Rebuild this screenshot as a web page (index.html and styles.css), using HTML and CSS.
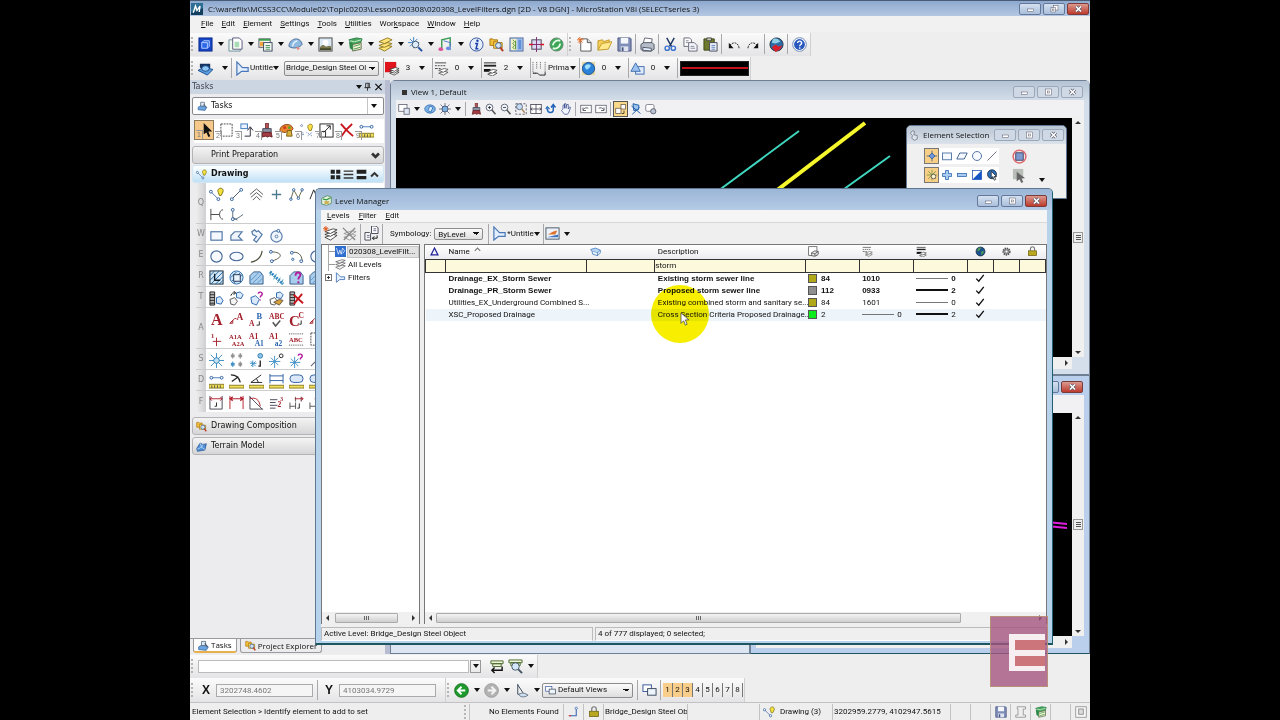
FILE: index.html
```html
<!DOCTYPE html>
<html lang="en">
<head>
  <meta charset="UTF-8">
  <title>MicroStation V8i - Level Manager</title>
  <link rel="stylesheet" href="styles.css">
</head>
<body>

<!-- icon library -->
<svg class="sprite" aria-hidden="true">
  <symbol id="logo" viewBox="0 0 16 16"><rect width="16" height="16" fill="#123d5c"/><path d="M0 0h16v7L0 13z" fill="#2d6f94"/><path d="M3 13l3-9 2 6 4-6-1 8" fill="none" stroke="#fff" stroke-width="1.8"/></symbol>
  <symbol id="cube" viewBox="0 0 16 16"><rect x="1" y="1" width="14" height="14" fill="#1746c8" stroke="#0a2a8c"/><path d="M4 6h6v6H4zM4 6l2-2h6v6l-2 2" fill="#2d68e8" stroke="#b9d2ff"/></symbol>
  <symbol id="page" viewBox="0 0 16 16"><path d="M1 3h9l3 3v9H1z" fill="#eef6ee" stroke="#6d8f9f"/><path d="M5 1h7l3 3v9H5z" fill="#fff" stroke="#557"/><path d="M7 5h5v6H7z" fill="#a9dcb4"/></symbol>
  <symbol id="dialog" viewBox="0 0 16 16"><rect x="1" y="2" width="12" height="9" fill="#fff" stroke="#556"/><path d="M1 2h12v2H1z" fill="#39a04c"/><path d="M2 5h4v5H2z" fill="#f2a640"/><rect x="6" y="6" width="9" height="9" fill="#fff" stroke="#345"/><path d="M8 9h5M8 11h5M8 13h5" stroke="#3a8a4a"/></symbol>
  <symbol id="disc" viewBox="0 0 16 16"><path d="M1 10c0-5 4-8 8-8s6 4 6 6c-3 4-10 5-14 2z" fill="#8db8e0" stroke="#4a6b94"/><path d="M5 10c0-3 2-5 5-6" fill="none" stroke="#e4f1ff" stroke-width="1.5"/><path d="M9 10l4 2-3 2z" fill="#e8877a"/></symbol>
  <symbol id="image" viewBox="0 0 16 16"><rect x="1" y="1" width="14" height="14" fill="#dbe9f3" stroke="#444"/><circle cx="8" cy="6" r="3" fill="#fff"/><path d="M2 11c3-4 5-2 6-1s4-2 6 0v4H2z" fill="#7c7a4e"/><path d="M2 13h12" stroke="#454a2c" stroke-width="2"/></symbol>
  <symbol id="sheets" viewBox="0 0 16 16"><path d="M1 3l8-2 6 1-2 5-8 2z" fill="#45a85c" stroke="#2b7a45"/><path d="M2 4l5 1 7-2" fill="none" stroke="#c7efd0"/><path d="M5 8l9-2v7l-9 2z" fill="#f6f3d2" stroke="#5c6b48"/><path d="M6 10l7-2M6 13l7-2" stroke="#3f9a55"/><path d="M1 5l4 2v7l-3-2z" fill="#2f8a48"/></symbol>
  <symbol id="layers" viewBox="0 0 16 16"><g fill="#ffe47a" stroke="#8f7a1c"><path d="M1 12l9-3 5 1-8 5z"/><path d="M1 9l9-3 5 1-8 4z"/><path d="M1 5l9-4 5 2-8 4z"/></g></symbol>
  <symbol id="glayers" viewBox="0 0 16 16"><g fill="#f4f4f4" stroke="#555"><path d="M1 12l9-3 5 1-8 5z"/><path d="M1 8l9-3 5 1-8 4z"/><path d="M1 4l9-3 5 1-8 4z"/></g></symbol>
  <symbol id="starmag" viewBox="0 0 16 16"><path d="M6 0v12M0 6h12M2 2l8 8M10 2l-8 8" stroke="#3d7fc4"/><circle cx="8" cy="8" r="3.5" fill="#dcedff" stroke="#456"/><path d="M11 11l4 4" stroke="#1d4f9e" stroke-width="2"/></symbol>
  <symbol id="music" viewBox="0 0 16 16"><path d="M4 12V3l9-2v9" fill="none" stroke="#3d9a52" stroke-width="1.5"/><path d="M6 4l7 2v8" fill="none" stroke="#4d74cf"/><ellipse cx="3" cy="13" rx="2.5" ry="2" fill="#d9549a"/><ellipse cx="11" cy="12" rx="2.5" ry="2" fill="#6b8ee0"/></symbol>
  <symbol id="info" viewBox="0 0 16 16"><circle cx="8" cy="8" r="7" fill="#e6eefc" stroke="#34549c"/><circle cx="9" cy="4" r="1.3" fill="#1c40a8"/><path d="M6.500 7H9l-1.500 5.500H10" fill="none" stroke="#1c40a8" stroke-width="1.6"/></symbol>
  <symbol id="folders" viewBox="0 0 16 16"><path d="M1 2h3l1 1h4v6H1z" fill="#f6c13a" stroke="#a87814"/><path d="M5 5h3l1 1h5v6H5z" fill="#ffd960" stroke="#a87814"/><circle cx="10" cy="9" r="3" fill="#cfe4fa" stroke="#3b5c8d"/><path d="M12 11l3 4" stroke="#b33a22" stroke-width="2"/></symbol>
  <symbol id="options" viewBox="0 0 16 16"><rect x="1" y="1" width="14" height="14" fill="#9fc0ec" stroke="#5670a0"/><path d="M2 2h6v12H2z" fill="#f3f0c8"/><path d="M4 3l2 2-2 2 2 2-2 2 2 2M7 4v9" stroke="#4c8f2e" fill="none"/><path d="M10 3h3v10h-3z" fill="#5f8fd8"/></symbol>
  <symbol id="cross" viewBox="0 0 16 16"><rect x="3" y="3" width="10" height="10" fill="#dcd7f2" stroke="#445"/><path d="M8 0v16M0 8h16" stroke="#7d2b6b"/><path d="M0 8h4M12 8h4" stroke="#d12" stroke-width="1.5"/></symbol>
  <symbol id="refresh" viewBox="0 0 16 16"><circle cx="8" cy="8" r="7" fill="#3da659" stroke="#6d8a74"/><path d="M4 9c1-5 5-6 8-5M12 7c-1 5-5 6-8 5" fill="none" stroke="#e6ffe9" stroke-width="2"/></symbol>
  <symbol id="new" viewBox="0 0 16 16"><path d="M4 2h7l4 4v9H4z" fill="#fff" stroke="#555"/><path d="M11 2v4h4" fill="#ddd" stroke="#555"/><path d="M3 0v7M0 3h7M1 1l5 5M6 1L1 6" stroke="#e8702a"/></symbol>
  <symbol id="open" viewBox="0 0 16 16"><path d="M1 14V4l5-1 1 2 6-2v3" fill="#f5cf5a" stroke="#c39a28"/><path d="M1 14L5 7l11-2-4 8z" fill="#ffe98c" stroke="#c39a28"/></symbol>
  <symbol id="save" viewBox="0 0 16 16"><path d="M1 1h13l1 1v13H1z" fill="#7f8fb8" stroke="#4a5680"/><path d="M4 1h8v6H4z" fill="#f5f7fc"/><path d="M4 10h8v5H4z" fill="#dfe4f0"/><path d="M5 11h2v4H5z" fill="#4a5680"/></symbol>
  <symbol id="print" viewBox="0 0 16 16"><path d="M5 1l8 1-1 6H3z" fill="#fff" stroke="#667"/><path d="M1 8l3-2h9l2 2v5l-3 2H3l-2-2z" fill="#b6bcc8" stroke="#4d5564"/><path d="M3 11l9 1v3l-9-1z" fill="#e9f0ff" stroke="#4d5564"/></symbol>
  <symbol id="cut" viewBox="0 0 16 16"><path d="M4 1l5 9M12 1L7 10" stroke="#223a66" stroke-width="1.6"/><circle cx="4.500" cy="12" r="2.300" fill="none" stroke="#3a73cf" stroke-width="1.500"/><circle cx="11" cy="12" r="2.300" fill="none" stroke="#3a73cf" stroke-width="1.500"/></symbol>
  <symbol id="copy" viewBox="0 0 16 16"><path d="M1 1h6l2 2v7H1z" fill="#fff" stroke="#667"/><path d="M6 6h6l3 3v6H6z" fill="#f4f6fb" stroke="#667"/><path d="M3 4h3M3 6h3M8 10h4M8 12h5" stroke="#889"/></symbol>
  <symbol id="paste" viewBox="0 0 16 16"><path d="M1 2h11v12H1z" fill="#6d7a2c" stroke="#3e4716"/><path d="M4 1h5v3H4z" fill="#c9c9b0" stroke="#444"/><path d="M7 6h8v9H7z" fill="#eef3fb" stroke="#445"/><path d="M9 9h4M9 11h4M9 13h4" stroke="#5c7fb8"/></symbol>
  <symbol id="undo" viewBox="0 0 16 16"><path d="M4 9c3-4 9-4 10 3" fill="none" stroke="#222" stroke-dasharray="2 1"/><path d="M3 6v6h5z" fill="#111"/></symbol>
  <symbol id="redo" viewBox="0 0 16 16"><path d="M12 9C9 5 3 5 2 12" fill="none" stroke="#222" stroke-dasharray="2 1"/><path d="M13 6v6H8z" fill="#111"/></symbol>
  <symbol id="webhome" viewBox="0 0 16 16"><circle cx="8" cy="8" r="7" fill="#2c6da8" stroke="#234"/><path d="M4 2c4-1 6 0 8 3l-5 2-4-1z" fill="#8fd0e6"/><path d="M3 11l4-3 3 2 4-1-2 4-5 3z" fill="#d8202c"/></symbol>
  <symbol id="help" viewBox="0 0 16 16"><circle cx="8" cy="8" r="7.300" fill="#fff" stroke="#6f86b4"/><circle cx="8" cy="8" r="5.800" fill="#2858be"/><path d="M6 6.500c0-3 4.500-2.600 4.300 0C10.200 8 8.300 8 8.200 9.800" fill="none" stroke="#fff" stroke-width="1.500"/><circle cx="8.200" cy="11.700" r=".9" fill="#fff"/></symbol>
  <symbol id="model" viewBox="0 0 16 16"><path d="M0 10l6-3 10 2-6 6z" fill="#5aa0e0" stroke="#1c4c8c"/><path d="M2 3h11v5l-5 3-6-4z" fill="#14325c"/><ellipse cx="8" cy="8" rx="4" ry="3" fill="#8cc6f2" stroke="#1c4c8c"/></symbol>
  <symbol id="funnel" viewBox="0 0 16 16"><path d="M2 1v14l5-4h7V7H8z" fill="#e3efff" stroke="#4a78b8" stroke-width="1.300"/></symbol>
  <symbol id="color" viewBox="0 0 16 16"><path d="M0 1h12v11H0z" fill="#e0141c"/><g fill="#fff" stroke="#333" stroke-width=".8"><path d="M5 13l6-2 4 1-5 3z"/><path d="M5 11l6-2 4 1-5 3z"/><path d="M5 9l6-2 4 1-5 3z"/></g></symbol>
  <symbol id="lstyle" viewBox="0 0 16 16"><path d="M1 2h12" stroke="#444"/><path d="M1 5h12" stroke="#444" stroke-dasharray="2 1"/><path d="M1 8h6" stroke="#444" stroke-dasharray="3 1"/><g fill="#fff" stroke="#444" stroke-width=".8"><path d="M5 13l6-2 4 1-5 3z"/><path d="M5 10l6-2 4 1-5 3z"/></g></symbol>
  <symbol id="lweight" viewBox="0 0 16 16"><path d="M1 2h13" stroke="#222"/><path d="M1 5h13" stroke="#222" stroke-width="2"/><path d="M1 10h7" stroke="#111" stroke-width="3"/><g fill="#fff" stroke="#333" stroke-width=".8"><path d="M5 14l6-2 4 1-5 3z"/><path d="M5 11l6-2 4 1-5 3z"/></g></symbol>
  <symbol id="eclass" viewBox="0 0 16 16"><path d="M1 1v12h4M5 1v8M9 1v8M14 1v12" fill="none" stroke="#555" stroke-dasharray="1 1"/><path d="M1 13h5l2 2h6v-3" fill="none" stroke="#222"/></symbol>
  <symbol id="sphere" viewBox="0 0 16 16"><path d="M1 1h14v14H1z" fill="#e6d9a2"/><circle cx="8" cy="8" r="6.500" fill="#2c82d8" stroke="#1a4f94"/><path d="M4 6c1-3 4-3 6-2 1 2-1 3-2 4-1 2-3 1-4-2z" fill="#9fe0ff"/></symbol>
  <symbol id="prio" viewBox="0 0 16 16"><rect x="6" y="6" width="9" height="8" fill="#dceafb" stroke="#3f6cae"/><path d="M1 11l5-9 5 9z" fill="#9cc3f0" stroke="#3f6cae"/></symbol>
  <symbol id="tasks" viewBox="0 0 16 16"><path d="M1 10l5-3 9 3-3 5-11-1z" fill="#6ba4de" stroke="#2b5c9c"/><path d="M5 2h6v6H5z" fill="#dbe9f8" stroke="#456"/><path d="M10 5l4 5" stroke="#456" stroke-width="1.500"/></symbol>
  <symbol id="terrain" viewBox="0 0 16 16"><path d="M1 11l5-8 4 2 5-1-2 9-5 1-6 1z" fill="#4f8fd6" stroke="#244f8c"/><path d="M6 3l2 6-6 3M8 9l5 3M10 5L8 9" fill="none" stroke="#d2e6fb"/></symbol>
  <symbol id="pin" viewBox="0 0 16 16"><path d="M5 2h6v7H5zM3 9h10M8 9v5M9 2v7" fill="none" stroke="#333" stroke-width="1.500"/></symbol>
  <symbol id="x" viewBox="0 0 16 16"><path d="M3 3l10 10M13 3L3 13" stroke="currentColor" stroke-width="2"/></symbol>
  <symbol id="wmin" viewBox="0 0 16 16"><rect x="2" y="8" width="12" height="5" fill="#fff" stroke="#556"/></symbol>
  <symbol id="wmax" viewBox="0 0 16 16"><rect x="2" y="2" width="12" height="12" fill="#fff" stroke="#556"/><rect x="6" y="6" width="4" height="4" fill="#fff" stroke="#556"/></symbol>
  <symbol id="wres" viewBox="0 0 16 16"><rect x="6" y="1" width="9" height="9" fill="#fff" stroke="#556"/><rect x="1" y="5" width="9" height="9" fill="#fff" stroke="#556"/><rect x="4" y="8" width="3" height="3" fill="#fff" stroke="#556"/></symbol>
  <symbol id="wx" viewBox="0 0 16 16"><path d="M3 3l10 10M13 3L3 13" stroke="#556" stroke-width="6"/><path d="M3 3l10 10M13 3L3 13" stroke="#fff" stroke-width="3.500"/></symbol>
  <!-- task tools -->
  <symbol id="arrow" viewBox="0 0 16 16"><path d="M5 0v12l3-2 2 5 2-1-2-5h4z" fill="#111"/></symbol>
  <symbol id="fence" viewBox="0 0 16 16"><rect x="2" y="1" width="12" height="13" fill="none" stroke="#444" stroke-dasharray="2 1"/></symbol>
  <symbol id="manip" viewBox="0 0 16 16"><rect x="2" y="1" width="7" height="5" fill="#eaf3ff" stroke="#3b77b8"/><path d="M12 5v9M9 8l3-4 3 4M6 14h6" fill="none" stroke="#223"/></symbol>
  <symbol id="brush" viewBox="0 0 16 16"><path d="M7 0h3v6H7z" fill="#b5555a" stroke="#733"/><path d="M4 6h9v4H4z" fill="#8c93a4" stroke="#445"/><path d="M4 10h9l1 5-3-1-2 1-2-1-4 1z" fill="#a33b45" stroke="#622"/></symbol>
  <symbol id="mush" viewBox="0 0 16 16"><path d="M1 7c1-6 12-8 14-1-2 4-4 2-5 2s-2 3-5 2-4-1-4-3z" fill="#e8862b" stroke="#8e4412"/><path d="M9 8h4l1 6H8z" fill="#d9b13c" stroke="#7a5c12"/><circle cx="6" cy="5" r="1.500" fill="#c32"/><circle cx="11" cy="5" r="1.500" fill="#5a2"/></symbol>
  <symbol id="bulb" viewBox="0 0 16 16"><path d="M10 6c-3-5 6-7 4-1l-1 3h-2z" fill="#ffe34d" stroke="#8f7b14"/><path d="M3 1v4M1 3h4M4 10v4M2 12h4M8 10l6 4M14 10l-5 4" stroke="#5674a8" stroke-dasharray="1 1"/></symbol>
  <symbol id="scale" viewBox="0 0 16 16"><rect x="1" y="1" width="14" height="14" fill="none" stroke="#222"/><path d="M5 10l7-7M8 3h4v4M1 9h6v6" fill="none" stroke="#222"/></symbol>
  <symbol id="del" viewBox="0 0 16 16"><path d="M2 1c4 5 8 9 13 13M14 1C9 5 5 10 2 15" fill="none" stroke="#c8141c" stroke-width="2"/></symbol>
  <symbol id="measure" viewBox="0 0 16 16"><path d="M3 4h10" stroke="#4a7cc0"/><circle cx="2.500" cy="4" r="1.500" fill="#fff" stroke="#2d5f9f"/><circle cx="13.500" cy="4" r="1.500" fill="#fff" stroke="#2d5f9f"/><path d="M0 11h16v4H0z" fill="#f1e05c" stroke="#8a7b20"/><path d="M3 12v3M6 12v3M9 12v3M12 12v3" stroke="#554"/></symbol>
  <symbol id="smart" viewBox="0 0 16 16"><path d="M2 5l8 8" stroke="#4c6fa8"/><circle cx="2" cy="5" r="1.500" fill="#fff" stroke="#2d5f9f"/><circle cx="10" cy="13" r="1.500" fill="#fff" stroke="#2d5f9f"/><path d="M10 6c-3-5 6-7 5-1l-2 4h-2z" fill="#f4e23c" stroke="#7d7318"/></symbol>
  <symbol id="line" viewBox="0 0 16 16"><path d="M3 13L13 3" stroke="#456"/><circle cx="3" cy="13" r="1.500" fill="#fff" stroke="#2d5f9f"/><circle cx="13" cy="3" r="1.500" fill="#fff" stroke="#2d5f9f"/></symbol>
  <symbol id="multi" viewBox="0 0 16 16"><path d="M1 8l7-6 7 6M2 11l6-5 6 5M4 14l4-4 4 4" fill="none" stroke="#555"/></symbol>
  <symbol id="plus" viewBox="0 0 16 16"><path d="M8 3v10M3 8h10" stroke="#4a7a8c" stroke-width="1.400"/></symbol>
  <symbol id="curve" viewBox="0 0 16 16"><path d="M2 13L5 3l5 9 4-9" fill="none" stroke="#664"/><g fill="#fff" stroke="#2d5f9f"><circle cx="2" cy="13" r="1.300"/><circle cx="5" cy="3" r="1.300"/><circle cx="10" cy="12" r="1.300"/><circle cx="14" cy="3" r="1.300"/></g></symbol>
  <symbol id="zig" viewBox="0 0 16 16"><path d="M1 13L5 3l4 9 5-9" fill="none" stroke="#222"/></symbol>
  <symbol id="cons" viewBox="0 0 16 16"><path d="M2 2v12M2 8h9M15 3c-5 0-5 10 0 10" fill="none" stroke="#444"/></symbol>
  <symbol id="perp" viewBox="0 0 16 16"><path d="M4 3v11c4-1 7-3 11-6M4 11l5 3" fill="none" stroke="#567"/><circle cx="4" cy="3" r="1.500" fill="#fff" stroke="#2d5f9f"/><circle cx="4" cy="13" r="1.500" fill="#fff" stroke="#2d5f9f"/></symbol>
  <symbol id="rect" viewBox="0 0 16 16"><rect x="2" y="4" width="12" height="9" fill="#f5f9ff" stroke="#567ba8" stroke-width="1.300"/></symbol>
  <symbol id="shape" viewBox="0 0 16 16"><path d="M2 13V8l4-4h8l-4 5 4 4z" fill="#f0f5fc" stroke="#567ba8" stroke-width="1.300"/></symbol>
  <symbol id="ortho" viewBox="0 0 16 16"><path d="M3 4l3-2 2 2 2-1 4 4-6 8-3-2 3-4-4-2z" fill="#f0f5fc" stroke="#567ba8" stroke-width="1.300"/></symbol>
  <symbol id="poly" viewBox="0 0 16 16"><circle cx="8" cy="9" r="6" fill="#f0f5fc" stroke="#567ba8" stroke-width="1.200"/><circle cx="8" cy="9" r="1.500" fill="none" stroke="#567ba8"/><circle cx="10" cy="3" r="1.500" fill="#fff" stroke="#2d5f9f"/></symbol>
  <symbol id="circle" viewBox="0 0 16 16"><circle cx="8" cy="8" r="6" fill="#f6faff" stroke="#48699a" stroke-width="1.200"/></symbol>
  <symbol id="ellipse" viewBox="0 0 16 16"><ellipse cx="8" cy="8" rx="7" ry="4.500" fill="#f6faff" stroke="#48699a" stroke-width="1.200"/></symbol>
  <symbol id="arc" viewBox="0 0 16 16"><path d="M2 14C8 13 13 9 14 2" fill="none" stroke="#554" stroke-width="1.300"/></symbol>
  <symbol id="arc2" viewBox="0 0 16 16"><path d="M2 3c10 0 16 5 1 10" fill="none" stroke="#554"/><circle cx="2" cy="3" r="1.500" fill="#fff" stroke="#2d5f9f"/><circle cx="3" cy="13" r="1.500" fill="#fff" stroke="#2d5f9f"/></symbol>
  <symbol id="arc3" viewBox="0 0 16 16"><path d="M3 4c6-2 11 2 11 9" fill="none" stroke="#554"/><circle cx="3" cy="4" r="1.500" fill="#fff" stroke="#2d5f9f"/><circle cx="13" cy="13" r="1.500" fill="#fff" stroke="#2d5f9f"/><circle cx="4" cy="11" r="1.200" fill="#fff" stroke="#2d5f9f"/></symbol>
  <symbol id="hatch" viewBox="0 0 16 16"><rect x="1" y="1" width="14" height="14" fill="#d4e9f8" stroke="#123"/><path d="M1 6l5-5M1 11L11 1M2 15L15 2M7 15l8-8M11 15l4-4" stroke="#1d5f9c"/><path d="M6 4v7h6" fill="none" stroke="#123" stroke-width="1.500"/></symbol>
  <symbol id="hatch2" viewBox="0 0 16 16"><circle cx="8" cy="8" r="7" fill="#cde5f8" stroke="#2c6ba8"/><path d="M3 12L12 3M5 14l9-9M2 8l6-6M4 4l9 9" stroke="#2c6ba8"/><rect x="5" y="5" width="7" height="7" fill="#e8f3fc" stroke="#235"/></symbol>
  <symbol id="pattern" viewBox="0 0 16 16"><path d="M1 15V6l4-4h7l3 4v9z" fill="#a9cdec" stroke="#345c88"/><path d="M2 11l8-8M4 14L14 4M9 14l5-5" stroke="#5f95c8"/></symbol>
  <symbol id="lpat" viewBox="0 0 16 16"><path d="M1 2l14 13" stroke="#2c82c8" stroke-width="3" stroke-dasharray="2 1"/><path d="M3 1l-2 5M8 4l-3 6M12 8l-3 6M15 10l-2 5" stroke="#49a"/></symbol>
  <symbol id="patq" viewBox="0 0 16 16"><path d="M1 15V6l4-4h7l3 4v9z" fill="#a9cdec" stroke="#345c88"/><path d="M7 6c0-5 6-4 5 0-1 2-2 2-2 4M10 12v2" fill="none" stroke="#b31a9c" stroke-width="2"/></symbol>
  <symbol id="tag" viewBox="0 0 16 16"><path d="M1 1h5v14H1z" fill="#bbb" stroke="#222"/><path d="M1 4h5M1 7h5M1 10h5M1 13h5" stroke="#222"/><path d="M8 7l4-1 3 4-2 4-5-1z" fill="#dbeafb" stroke="#2b66b0"/></symbol>
  <symbol id="tag2" viewBox="0 0 16 16"><path d="M8 2l4-1 3 3-2 4-5-1z" fill="#dbeafb" stroke="#2b66b0"/><path d="M1 9l5-2 3 4-3 4-4-1z" fill="#f4f4f4" stroke="#555"/><path d="M2 5c1-3 2-3 5-3M5 0l2 2-2 2" fill="none" stroke="#111"/></symbol>
  <symbol id="tagq" viewBox="0 0 16 16"><path d="M2 7l5-2 4 4-3 6-5-2z" fill="#dbeafb" stroke="#2b66b0"/><path d="M10 3c0-3 5-2 4 1-1 1-2 1-2 3M12 9v1" fill="none" stroke="#b31a9c" stroke-width="1.500"/></symbol>
  <symbol id="tag4" viewBox="0 0 16 16"><path d="M8 2l4-1 3 3-2 4-5-1z" fill="#dbeafb" stroke="#2b66b0"/><path d="M1 9l5-2 3 4-3 4-4-1z" fill="#fff" stroke="#555"/><path d="M5 12l6-3 4 1-4 5z" fill="#d4a13a" stroke="#654"/></symbol>
  <symbol id="tagx" viewBox="0 0 16 16"><path d="M1 1h5v14H1z" fill="#bbb" stroke="#222"/><path d="M1 4h5M1 7h5M1 10h5M1 13h5" stroke="#222"/><path d="M5 4l10 9M14 3L5 14" stroke="#c8141c" stroke-width="2"/></symbol>
  <symbol id="t-a" viewBox="0 0 16 16"><text class="ser red" x="2" y="14" font-size="17">A</text></symbol>
  <symbol id="t-note" viewBox="0 0 16 16"><text class="ser red" x="8" y="9" font-size="10">A</text><path d="M1 12l3-3v3h-3l5-5h2" fill="none" stroke="#a3202c"/></symbol>
  <symbol id="t-edit" viewBox="0 0 16 16"><text class="ser blue" x="8" y="7" font-size="9">B</text><text class="ser red" x="0" y="15" font-size="8">A</text><path d="M8 14h3v-4" fill="none" stroke="#222"/></symbol>
  <symbol id="t-spell" viewBox="0 0 16 16"><text class="ser red" x="0" y="7" font-size="8">ABC</text><path d="M4 11l3 4 5-6" fill="none" stroke="#555" stroke-width="1.600"/></symbol>
  <symbol id="t-c" viewBox="0 0 16 16"><text class="ser red" x="0" y="15" font-size="16">C</text><text class="ser red" x="10" y="6" font-size="8">C</text><path d="M11 13h2V9" fill="none" stroke="#222"/></symbol>
  <symbol id="t-attr" viewBox="0 0 16 16"><text class="ser red" x="2" y="6" font-size="7">1</text><path d="M8 6v9M4 10h9" stroke="#a3202c"/></symbol>
  <symbol id="t-copy" viewBox="0 0 16 16"><text class="ser red" x="0" y="7" font-size="7">A1A</text><text class="ser red" x="3" y="15" font-size="7">A2A</text></symbol>
  <symbol id="t-inc" viewBox="0 0 16 16"><text class="ser red" x="0" y="7" font-size="8">A1</text><text class="ser blue" x="6" y="15" font-size="8">A1</text></symbol>
  <symbol id="t-inc2" viewBox="0 0 16 16"><text class="ser red" x="0" y="7" font-size="8">A1</text><text class="ser blue" x="6" y="15" font-size="8">a2</text></symbol>
  <symbol id="t-field" viewBox="0 0 16 16"><path d="M0 2h16M0 14h16" stroke="#444" stroke-dasharray="1 1"/><text class="ser red" x="0" y="11" font-size="7">ABC</text></symbol>
  <symbol id="cell" viewBox="0 0 16 16"><path d="M8 0v16M0 8h16M2 2l12 12M14 2L2 14" stroke="#3f8fc4"/><circle cx="8" cy="8" r="3" fill="#bfe2f6" stroke="#2f7cb0"/></symbol>
  <symbol id="cells" viewBox="0 0 16 16"><g stroke-width="3"><path d="M2 3h4M10 3h4M10 12h4" stroke="#9a9a9a"/><path d="M2 12h4" stroke="#3f8fc4"/></g><path d="M4 0v6M12 0v6M12 9v6" stroke="#888"/><path d="M4 9v6" stroke="#3f8fc4"/></symbol>
  <symbol id="cellr" viewBox="0 0 16 16"><circle cx="12" cy="3" r="2.500" fill="#8fc6e8" stroke="#2f7cb0"/><path d="M4 8v7M1 11h7M2 9l5 5M7 9l-5 5" stroke="#3f8fc4"/><path d="M10 14h2V8" fill="none" stroke="#222" stroke-width="1.400"/></symbol>
  <symbol id="cello" viewBox="0 0 16 16"><path d="M6 3v13M0 9h12M2 5l8 8M10 5l-8 8" stroke="#3f8fc4"/><circle cx="13" cy="3" r="2" fill="#fff" stroke="#222"/></symbol>
  <symbol id="cellq" viewBox="0 0 16 16"><path d="M6 4v12M1 10h11M2 6l8 8M10 6l-8 8" stroke="#3f8fc4"/><path d="M10 3c0-3 5-2 4 1-1 1-2 1-2 3" fill="none" stroke="#b31a9c" stroke-width="1.500"/></symbol>
  <symbol id="m-rad" viewBox="0 0 16 16"><path d="M2 1c6 0 9 3 10 8M3 8l7-5" fill="none" stroke="#222" stroke-width="1.300"/><path d="M0 12h16v3H0z" fill="#f1e05c" stroke="#8a7b20"/></symbol>
  <symbol id="m-ang" viewBox="0 0 16 16"><path d="M13 1L2 9h12M8 5l2 4" fill="none" stroke="#222"/><path d="M0 12h16v3H0z" fill="#f1e05c" stroke="#8a7b20"/></symbol>
  <symbol id="m-len" viewBox="0 0 16 16"><path d="M1 0v10M15 0v10M1 2h14M1 7h14" stroke="#2d5f9f"/><path d="M0 12h16v3H0z" fill="#f1e05c" stroke="#8a7b20"/></symbol>
  <symbol id="m-area" viewBox="0 0 16 16"><rect x="1" y="1" width="14" height="8" rx="4" fill="#dbe8f8" stroke="#2d5f9f"/><path d="M0 12h16v3H0z" fill="#f1e05c" stroke="#8a7b20"/></symbol>
  <symbol id="d-elem" viewBox="0 0 16 16"><path d="M1 1v14h13V1" fill="none" stroke="#445"/><path d="M1 4h13M3 2L1 4l2 2M12 2l2 2-2 2" fill="none" stroke="#b3202c"/><path d="M6 12h2V8" fill="none" stroke="#222"/></symbol>
  <symbol id="d-lin" viewBox="0 0 16 16"><path d="M1 1v14M15 1v14" stroke="#b3202c"/><path d="M1 4h14M4 2L1 4l3 2M12 2l3 2-3 2" fill="none" stroke="#b3202c" stroke-width="1.300"/></symbol>
  <symbol id="d-ang" viewBox="0 0 16 16"><path d="M1 1v14h14M1 2l13 13" fill="none" stroke="#445"/><path d="M1 4c6-2 10 1 11 8" fill="none" stroke="#b3202c"/></symbol>
  <symbol id="d-ord" viewBox="0 0 16 16"><path d="M1 5h8M1 8h6M1 11h8M1 14h6" stroke="#445"/><text class="ser red" x="9" y="13" font-size="8">2</text><text class="ser red" x="12" y="6" font-size="6">3</text></symbol>
  <symbol id="d-chg" viewBox="0 0 16 16"><path d="M1 8v7M7 8v7M1 12h6M7 2v5M13 2v5" stroke="#555"/><path d="M6 4h9M13 2l2 2-2 2" fill="none" stroke="#b3202c"/><path d="M9 14h2V9" fill="none" stroke="#222"/></symbol>
  <symbol id="grid4" viewBox="0 0 16 16"><path d="M1 1h6v6H1zM9 1h6v6H9zM1 9h6v6H1zM9 9h6v6H9z" fill="#222"/></symbol>
  <symbol id="list" viewBox="0 0 16 16"><path d="M1 3h14M1 8h14M1 13h14" stroke="#333" stroke-width="2"/></symbol>
  <symbol id="bars" viewBox="0 0 16 16"><path d="M1 1h14v6H1zM1 10h14v5H1z" fill="#222"/></symbol>
  <symbol id="up" viewBox="0 0 16 16"><path d="M3 11l5-5 5 5" fill="none" stroke="#333" stroke-width="3"/></symbol>
  <symbol id="down" viewBox="0 0 16 16"><path d="M3 5l5 5 5-5" fill="none" stroke="#333" stroke-width="4"/></symbol>
  <!-- view tools -->
  <symbol id="vattr" viewBox="0 0 16 16"><rect x="1" y="2" width="11" height="9" fill="#fff" stroke="#556"/><rect x="8" y="7" width="7" height="8" fill="#dde6f2" stroke="#556"/></symbol>
  <symbol id="vdisp" viewBox="0 0 16 16"><ellipse cx="8" cy="8" rx="7" ry="5.500" fill="#7fb6e8" stroke="#245fa8"/><path d="M5 10l3-6 4 2-3 6z" fill="#d4ebff" stroke="#245fa8"/></symbol>
  <symbol id="vsun" viewBox="0 0 16 16"><path d="M8 0v16M0 8h16M2 2l12 12M14 2L2 14" stroke="#556"/><circle cx="8" cy="8" r="4" fill="#7fb0e0" stroke="#346"/></symbol>
  <symbol id="zin" viewBox="0 0 16 16"><circle cx="6" cy="6" r="4.500" fill="#eef4fb" stroke="#445"/><path d="M4 6h4M6 4v4" stroke="#222"/><path d="M9 9l5 6" stroke="#555" stroke-width="2"/></symbol>
  <symbol id="zout" viewBox="0 0 16 16"><circle cx="6" cy="6" r="4.500" fill="#eef4fb" stroke="#445"/><path d="M4 6h4" stroke="#222"/><path d="M9 9l5 6" stroke="#555" stroke-width="2"/></symbol>
  <symbol id="warea" viewBox="0 0 16 16"><path d="M1 1h14v14H1z" fill="none" stroke="#445" stroke-dasharray="3 2"/><circle cx="6" cy="5" r="4" fill="#c5dcf4" stroke="#456"/><path d="M9 8l4 5" stroke="#a86" stroke-width="2"/></symbol>
  <symbol id="fit" viewBox="0 0 16 16"><rect x="1" y="2" width="14" height="12" fill="#fff" stroke="#334"/><path d="M8 2v12M1 8h14M3 6L1 8l2 2M13 6l2 2-2 2" fill="none" stroke="#334"/></symbol>
  <symbol id="rot" viewBox="0 0 16 16"><path d="M3 7c0 7 7 7 8 3V4M8 6l3-4 3 4" fill="none" stroke="#2467b8" stroke-width="2"/><path d="M1 8l2-3 3 3" fill="none" stroke="#2467b8" stroke-width="1.500"/></symbol>
  <symbol id="hand" viewBox="0 0 16 16"><path d="M4 8V3l2-1v5V1h2v6l1-5h2v6l2-3 1 1-2 6-2 3H6L2 10l1-1z" fill="#f1f5ff" stroke="#3c4c8c"/></symbol>
  <symbol id="grayhand" viewBox="0 0 16 16"><path d="M5 1l3 1-1 5 5 1v5l-4 2-4-3 1-4-3-3z" fill="#dde3ea" stroke="#667"/></symbol>
  <symbol id="vprev" viewBox="0 0 16 16"><rect x="1" y="3" width="14" height="10" fill="#fff" stroke="#556"/><path d="M4 9c2-3 5-3 7-2M4 6v4h4" fill="none" stroke="#334"/></symbol>
  <symbol id="vnext" viewBox="0 0 16 16"><rect x="1" y="3" width="14" height="10" fill="#fff" stroke="#556"/><path d="M12 9C10 6 7 6 5 7M12 6v4H8" fill="none" stroke="#334"/></symbol>
  <symbol id="vcopy" viewBox="0 0 16 16"><rect x="1" y="7" width="7" height="7" fill="#fff" stroke="#654"/><rect x="8" y="2" width="6" height="6" fill="#fff" stroke="#654"/><path d="M9 14h3v-4" fill="none" stroke="#222"/></symbol>
  <symbol id="vclip" viewBox="0 0 16 16"><path d="M4 1l8 2-1 6-6 1z" fill="#9cc5ee" stroke="#245fa8" stroke-width="1.300"/><path d="M2 4l12 10M13 6L3 15" fill="none" stroke="#245fa8" stroke-width="1.300"/></symbol>
  <symbol id="vmask" viewBox="0 0 16 16"><rect x="1" y="2" width="11" height="9" rx="2" fill="#fff" stroke="#667"/><circle cx="11" cy="11" r="3.500" fill="#b9c4d6" stroke="#445"/></symbol>
  <symbol id="gear" viewBox="0 0 16 16"><circle cx="8" cy="8" r="4.500" fill="#bbb" stroke="#555" stroke-width="3" stroke-dasharray="2 1"/><circle cx="8" cy="8" r="2" fill="#fff" stroke="#666"/></symbol>
  <symbol id="invert" viewBox="0 0 16 16"><rect x="2" y="2" width="12" height="12" fill="#fff" stroke="#1d4fae"/><path d="M14 2v12H2z" fill="#1656c4"/></symbol>
  <symbol id="bplus" viewBox="0 0 16 16"><path d="M6 2h4v4h4v4h-4v4H6v-4H2V6h4z" fill="#a9cdf2" stroke="#265fa8"/></symbol>
  <symbol id="bminus" viewBox="0 0 16 16"><rect x="2" y="6" width="12" height="4" fill="#a9cdf2" stroke="#265fa8"/></symbol>
  <symbol id="skew" viewBox="0 0 16 16"><path d="M5 4h10l-4 8H1z" fill="#f4f8ff" stroke="#355a8c" stroke-width="1.200"/></symbol>
  <symbol id="slash" viewBox="0 0 16 16"><path d="M2 14L14 2" stroke="#667" stroke-width="1.200"/></symbol>
  <symbol id="nosel" viewBox="0 0 16 16"><rect x="4" y="4" width="8" height="8" fill="#7f9ace" stroke="#446"/><circle cx="8" cy="8" r="6.800" fill="none" stroke="#e0686c" stroke-width="1.600"/></symbol>
  <symbol id="selarrow" viewBox="0 0 16 16"><path d="M1 1h11v11H1z" fill="#b9beb8"/><path d="M5 4v10l3-2 2 4 2-1-2-4h4z" fill="#666"/></symbol>
  <symbol id="sparkle" viewBox="0 0 16 16"><path d="M8 1v14M1 8h14M3 3l10 10M13 3L3 13" stroke="#6b8f3a"/><circle cx="10" cy="10" r="3" fill="#fff6c8" stroke="#445"/></symbol>
  <symbol id="target" viewBox="0 0 16 16"><path d="M8 1v14M1 8h14" stroke="#26539a"/><path d="M8 4l4 4-4 4-4-4z" fill="#6d96d8" stroke="#26539a"/></symbol>
  <symbol id="selall" viewBox="0 0 16 16"><circle cx="8" cy="7" r="6" fill="#2c6fb8" stroke="#123"/><path d="M7 3v9l2-2 2 5 2-1-2-4h3z" fill="#fff" stroke="#222"/></symbol>
  <!-- level manager -->
  <symbol id="lvlmgr" viewBox="0 0 16 16"><path d="M1 5l8-4 6 2v9l-7 3-7-2z" fill="#e9f3df" stroke="#3b7a3e"/><path d="M3 6l5 1 6-3" fill="none" stroke="#2f9a45" stroke-width="2"/><path d="M5 10h7M5 12h6" stroke="#c79b2a" stroke-width="1.500"/></symbol>
  <symbol id="newlvl" viewBox="0 0 16 16"><g fill="#fff" stroke="#333" stroke-width=".9"><path d="M2 12l9-3 4 1-7 5z"/><path d="M2 9l9-3 4 1-7 4z"/><path d="M2 6l9-3 4 1-7 4z"/></g><path d="M3 0v6M0 3h6M1 1l4 4M5 1L1 5" stroke="#e0571c"/></symbol>
  <symbol id="dellvl" viewBox="0 0 16 16"><g fill="#f2f2f2" stroke="#999"><path d="M2 12l9-3 4 1-7 5z"/><path d="M2 8l9-3 4 1-7 4z"/></g><path d="M1 2l13 13M14 2L2 15" stroke="#888" stroke-width="1.500"/></symbol>
  <symbol id="chg" viewBox="0 0 16 16"><path d="M8 0h5l2 2v6H8zM1 7h5l1 1v7H1z" fill="#fff" stroke="#445"/><path d="M10 3h3M10 5h3M3 10h3M3 12h3" stroke="#668"/><path d="M14 10v3H9M11 11l-2 2 2 2" fill="none" stroke="#111"/></symbol>
  <symbol id="chart" viewBox="0 0 16 16"><rect x="1" y="2" width="14" height="12" fill="#eef3fa" stroke="#456"/><path d="M3 9c3-1 5-4 10-4l-2 4z" fill="#e0742c"/><path d="M2 12h12V9z" fill="#3d74c4"/></symbol>
  <symbol id="dgn" viewBox="0 0 16 16"><rect width="16" height="16" fill="#2f6fd0"/><path d="M2 3l3 9 2-6 2 6 2-9 3 4-3 4" fill="none" stroke="#fff"/></symbol>
  <symbol id="triangle" viewBox="0 0 16 16"><path d="M8 3l5 10H3z" fill="none" stroke="#23239a" stroke-width="1.800"/></symbol>
  <symbol id="book" viewBox="0 0 16 16"><path d="M1 5l7-2 7 3-4 4-8-2z" fill="#b7d6f4" stroke="#2d6ab0"/><path d="M3 8l1 4 7 2v-4M11 14l4-4V6" fill="#e9f3fd" stroke="#2d6ab0"/></symbol>
  <symbol id="hcolor" viewBox="0 0 16 16"><rect x="1" y="1" width="12" height="13" fill="#fff" stroke="#444"/><path d="M5 10l5-3 5 1v4l-5 3-5-1zM5 10l5 1 5-3M10 11v4" fill="#ddd" stroke="#444"/></symbol>
  <symbol id="globe" viewBox="0 0 16 16"><circle cx="8" cy="8" r="6.500" fill="#1b4f8f" stroke="#123"/><path d="M4 4c2-2 4-2 5-1l-3 4-3 1zM9 8l4-1-1 4-3 2z" fill="#4f9c54"/></symbol>
  <symbol id="lock" viewBox="0 0 16 16"><path d="M5 7V4c0-4 6-4 6 0v3" fill="none" stroke="#777" stroke-width="1.600"/><rect x="2" y="7" width="12" height="7" fill="#b9a81f" stroke="#6a5f10"/></symbol>
  <symbol id="check" viewBox="0 0 16 16"><path d="M2 9l4 4 8-10" fill="none" stroke="#111" stroke-width="2.200"/></symbol>
  <symbol id="sortup" viewBox="0 0 16 16"><path d="M4 7l4-4 4 4" fill="none" stroke="#777" stroke-width="1.500"/></symbol>
  <!-- bottom bars -->
  <symbol id="keyin" viewBox="0 0 16 16"><path d="M2 2h13v3H2zM4 5h9v3H4z" fill="#eef5d8" stroke="#4a6a2c"/><path d="M14 8v4H3M6 9l-3 3 3 3" fill="none" stroke="#111" stroke-width="1.500"/></symbol>
  <symbol id="keymag" viewBox="0 0 16 16"><path d="M1 1h14v3H1zM3 4h10v3H3z" fill="#eef5d8" stroke="#4a6a2c"/><circle cx="8" cy="8" r="4" fill="#d3e6fa" stroke="#456"/><path d="M11 11l4 4" stroke="#456" stroke-width="2"/></symbol>
  <symbol id="back" viewBox="0 0 16 16"><circle cx="8" cy="8" r="7.300" fill="#1f9a2c" stroke="#12701d"/><path d="M12 8H5M8 4L4 8l4 4" fill="none" stroke="#fff" stroke-width="2"/></symbol>
  <symbol id="fwd" viewBox="0 0 16 16"><circle cx="8" cy="8" r="7.300" fill="#b3b3b3" stroke="#999"/><path d="M4 8h7M8 4l4 4-4 4" fill="none" stroke="#f4f4f4" stroke-width="2"/></symbol>
  <symbol id="axes" viewBox="0 0 16 16"><path d="M4 1v11l10 1M4 2l6 9" fill="none" stroke="#345"/><path d="M5 12c4-2 7-1 10 1-4 3-9 2-10-1z" fill="#cfdff0" stroke="#678"/></symbol>
  <symbol id="views" viewBox="0 0 16 16"><rect x="1" y="2" width="9" height="7" fill="#fff" stroke="#34549c"/><rect x="6" y="6" width="9" height="7" fill="#eef4fb" stroke="#345"/></symbol>
  <symbol id="snap" viewBox="0 0 16 16"><path d="M2 13h9V4" fill="none" stroke="#3a66b0" stroke-width="1.400"/><circle cx="11" cy="3" r="1.500" fill="#fff" stroke="#3a66b0"/><path d="M1 13h3" stroke="#c33" stroke-width="1.500"/></symbol>
  <symbol id="scroll" viewBox="0 0 16 16"><path d="M3 1h11v3h-3v8h3v3H1v-3h3V4H3z" fill="#eee" stroke="#888"/></symbol>
  <symbol id="focus" viewBox="0 0 16 16"><rect x="1" y="1" width="14" height="14" fill="#f6f6f6" stroke="#888"/><rect x="5" y="4" width="6" height="7" fill="#ddd" stroke="#777"/></symbol>
</svg>

<div class="desktop">

  <header class="app-title">
    <svg class="ic12"><use href="#logo"/></svg>
    <h1>C:\wareflix\MCSS3CC\Module02\Topic0203\Lesson020308\020308_LevelFilters.dgn [2D - V8 DGN] - MicroStation V8i (SELECTseries 3)</h1>
    <div class="winbtns">
      <button aria-label="Minimize"><svg><use href="#wmin"/></svg></button>
      <button aria-label="Restore"><svg><use href="#wres"/></svg></button>
      <button class="close" aria-label="Close"><svg><use href="#wx"/></svg></button>
    </div>
  </header>

  <nav class="menubar">
    <button><u>F</u>ile</button><button><u>E</u>dit</button><button><u>E</u>lement</button><button><u>S</u>ettings</button><button><u>T</u>ools</button><button><u>U</u>tilities</button><button>Wor<u>k</u>space</button><button><u>W</u>indow</button><button><u>H</u>elp</button>
  </nav>

  <div class="bar">
    <div class="strip">
      <i class="grip"></i>
      <button class="tb dd" aria-label="Models"><svg><use href="#cube"/></svg></button>
      <button class="tb dd" aria-label="References"><svg><use href="#page"/></svg></button>
      <button class="tb dd" aria-label="Dialogs"><svg><use href="#dialog"/></svg></button>
      <button class="tb dd" aria-label="Raster"><svg><use href="#disc"/></svg></button>
      <button class="tb dd" aria-label="Images"><svg><use href="#image"/></svg></button>
      <button class="tb dd" aria-label="Level Manager"><svg><use href="#sheets"/></svg></button>
      <button class="tb dd" aria-label="Level Display"><svg><use href="#layers"/></svg></button>
      <button class="tb dd" aria-label="Cells"><svg><use href="#starmag"/></svg></button>
      <button class="tb dd" aria-label="AccuDraw"><svg><use href="#music"/></svg></button>
      <button class="tb" aria-label="Element Information"><svg><use href="#info"/></svg></button>
      <button class="tb" aria-label="Explorer"><svg><use href="#folders"/></svg></button>
      <button class="tb" aria-label="Toggles"><svg><use href="#options"/></svg></button>
      <button class="tb" aria-label="Popset"><svg><use href="#cross"/></svg></button>
      <button class="tb" aria-label="Update"><svg><use href="#refresh"/></svg></button>
    </div>
    <div class="strip">
      <i class="grip"></i>
      <button class="tb" aria-label="New"><svg><use href="#new"/></svg></button>
      <button class="tb" aria-label="Open"><svg><use href="#open"/></svg></button>
      <button class="tb" aria-label="Save"><svg><use href="#save"/></svg></button>
      <i class="sep"></i>
      <button class="tb" aria-label="Print"><svg><use href="#print"/></svg></button>
      <i class="sep"></i>
      <button class="tb" aria-label="Cut"><svg><use href="#cut"/></svg></button>
      <button class="tb" aria-label="Copy"><svg><use href="#copy"/></svg></button>
      <button class="tb" aria-label="Paste"><svg><use href="#paste"/></svg></button>
      <i class="sep"></i>
      <button class="tb" aria-label="Undo"><svg><use href="#undo"/></svg></button>
      <button class="tb" aria-label="Redo"><svg><use href="#redo"/></svg></button>
      <i class="sep"></i>
      <button class="tb" aria-label="Web"><svg><use href="#webhome"/></svg></button>
      <i class="sep"></i>
      <button class="tb" aria-label="Help"><svg><use href="#help"/></svg></button>
    </div>
  </div>

  <div class="bar">
    <div class="strip">
      <i class="grip"></i>
      <button class="tb dd wide" aria-label="Template"><svg><use href="#model"/></svg></button>
      <i class="sep"></i>
      <button class="tb val filter"><svg><use href="#funnel"/></svg><span>Untitle</span></button>
      <select class="combo level" aria-label="Active Level"><option>Bridge_Design Steel Ol</option></select>
      <i class="sep"></i>
      <button class="tb val num"><svg><use href="#color"/></svg><span>3</span></button>
      <i class="sep"></i>
      <button class="tb val num"><svg><use href="#lstyle"/></svg><span>0</span></button>
      <i class="sep"></i>
      <button class="tb val num"><svg><use href="#lweight"/></svg><span>2</span></button>
      <i class="sep"></i>
      <button class="tb val num class"><svg><use href="#eclass"/></svg><span>Prima</span></button>
      <i class="sep"></i>
      <button class="tb val num"><svg><use href="#sphere"/></svg><span>0</span></button>
      <i class="sep"></i>
      <button class="tb val num"><svg><use href="#prio"/></svg><span>0</span></button>
      <i class="sep"></i>
      <div class="swatch"></div>
    </div>
  </div>

  <main class="work">
    <aside class="tasks">
      <div class="tasks-head"><h2>Tasks</h2><button class="caret" aria-label="Options"></button><button aria-label="Auto hide"><svg><use href="#pin"/></svg></button><button aria-label="Close"><svg><use href="#x"/></svg></button></div>
      <div class="tasks-combo"><svg><use href="#tasks"/></svg><select aria-label="Task"><option>Tasks</option></select></div>
      <div class="main-tools">
        <button class="on" aria-label="Element Selection"><svg><use href="#arrow"/></svg><span>1</span></button>
        <button aria-label="Fence"><svg><use href="#fence"/></svg><span>2</span></button>
        <button aria-label="Manipulate"><svg><use href="#manip"/></svg><span>3</span></button>
        <button aria-label="View Control"><svg><use href="#brush"/></svg><span>4</span></button>
        <button aria-label="Change Attributes"><svg><use href="#mush"/></svg><span>5</span></button>
        <button aria-label="Groups"><svg><use href="#bulb"/></svg><span>6</span></button>
        <button aria-label="Modify"><svg><use href="#scale"/></svg><span>7</span></button>
        <button aria-label="Delete"><svg><use href="#del"/></svg><span>8</span></button>
        <button aria-label="Measure"><svg><use href="#measure"/></svg><span>9</span></button>
      </div>
      <button class="task-bar"><span>Print Preparation</span><svg><use href="#down"/></svg></button>
      <div class="task-bar open"><svg class="lead"><use href="#smart"/></svg><span>Drawing</span><button aria-label="Icons"><svg><use href="#grid4"/></svg></button><button aria-label="List"><svg><use href="#list"/></svg></button><button class="sel" aria-label="Panel"><svg><use href="#bars"/></svg></button><button aria-label="Collapse"><svg><use href="#up"/></svg></button></div>
      <div class="tool-rows">
        <div class="tool-row two"><b>Q</b>
          <div><button aria-label="SmartLine"><svg><use href="#smart"/></svg></button><button aria-label="Line"><svg><use href="#line"/></svg></button><button aria-label="Multi-line"><svg><use href="#multi"/></svg></button><button aria-label="Point"><svg><use href="#plus"/></svg></button><button aria-label="Curve"><svg><use href="#curve"/></svg></button><button aria-label="Stream curve"><svg><use href="#zig"/></svg></button></div>
          <div><button aria-label="Construct line"><svg><use href="#cons"/></svg></button><button aria-label="Angle bisector"><svg><use href="#perp"/></svg></button></div>
        </div>
        <div class="tool-row"><b>W</b>
          <div><button aria-label="Block"><svg><use href="#rect"/></svg></button><button aria-label="Shape"><svg><use href="#shape"/></svg></button><button aria-label="Orthogonal shape"><svg><use href="#ortho"/></svg></button><button aria-label="Polygon"><svg><use href="#poly"/></svg></button></div>
        </div>
        <div class="tool-row"><b>E</b>
          <div><button aria-label="Circle"><svg><use href="#circle"/></svg></button><button aria-label="Ellipse"><svg><use href="#ellipse"/></svg></button><button aria-label="Arc"><svg><use href="#arc"/></svg></button><button aria-label="Half ellipse"><svg><use href="#arc2"/></svg></button><button aria-label="Quarter ellipse"><svg><use href="#arc3"/></svg></button><button aria-label="Modify arc"><svg><use href="#circle"/></svg></button></div>
        </div>
        <div class="tool-row"><b>R</b>
          <div><button aria-label="Hatch"><svg><use href="#hatch"/></svg></button><button aria-label="Crosshatch"><svg><use href="#hatch2"/></svg></button><button aria-label="Pattern area"><svg><use href="#pattern"/></svg></button><button aria-label="Linear pattern"><svg><use href="#lpat"/></svg></button><button aria-label="Show pattern"><svg><use href="#patq"/></svg></button><button aria-label="Match pattern"><svg><use href="#pattern"/></svg></button></div>
        </div>
        <div class="tool-row"><b>T</b>
          <div><button aria-label="Attach tags"><svg><use href="#tag"/></svg></button><button aria-label="Edit tags"><svg><use href="#tag2"/></svg></button><button aria-label="Review tags"><svg><use href="#tagq"/></svg></button><button aria-label="Change tags"><svg><use href="#tag4"/></svg></button><button aria-label="Delete tags"><svg><use href="#tagx"/></svg></button></div>
        </div>
        <div class="tool-row two"><b>A</b>
          <div><button aria-label="Place text"><svg><use href="#t-a"/></svg></button><button aria-label="Place note"><svg><use href="#t-note"/></svg></button><button aria-label="Edit text"><svg><use href="#t-edit"/></svg></button><button aria-label="Spell checker"><svg><use href="#t-spell"/></svg></button><button aria-label="Change text"><svg><use href="#t-c"/></svg></button><button aria-label="Text node"><svg><use href="#t-note"/></svg></button></div>
          <div><button aria-label="Text attributes"><svg><use href="#t-attr"/></svg></button><button aria-label="Copy text"><svg><use href="#t-copy"/></svg></button><button aria-label="Increment text"><svg><use href="#t-inc"/></svg></button><button aria-label="Copy and increment"><svg><use href="#t-inc2"/></svg></button><button aria-label="Data field"><svg><use href="#t-field"/></svg></button><button aria-label="Fill field"><svg><use href="#fence"/></svg></button></div>
        </div>
        <div class="tool-row"><b>S</b>
          <div><button aria-label="Place cell"><svg><use href="#cell"/></svg></button><button aria-label="Cell matrix"><svg><use href="#cells"/></svg></button><button aria-label="Replace cell"><svg><use href="#cellr"/></svg></button><button aria-label="Define origin"><svg><use href="#cello"/></svg></button><button aria-label="Identify cell"><svg><use href="#cellq"/></svg></button><button aria-label="Select cell"><svg><use href="#slash"/></svg></button></div>
        </div>
        <div class="tool-row"><b>D</b>
          <div><button aria-label="Measure distance"><svg><use href="#measure"/></svg></button><button aria-label="Measure radius"><svg><use href="#m-rad"/></svg></button><button aria-label="Measure angle"><svg><use href="#m-ang"/></svg></button><button aria-label="Measure length"><svg><use href="#m-len"/></svg></button><button aria-label="Measure area"><svg><use href="#m-area"/></svg></button><button aria-label="Measure volume"><svg><use href="#m-area"/></svg></button></div>
        </div>
        <div class="tool-row"><b>F</b>
          <div><button aria-label="Dimension element"><svg><use href="#d-elem"/></svg></button><button aria-label="Linear dimension"><svg><use href="#d-lin"/></svg></button><button aria-label="Angular dimension"><svg><use href="#d-ang"/></svg></button><button aria-label="Ordinate dimension"><svg><use href="#d-ord"/></svg></button><button aria-label="Change dimension"><svg><use href="#d-chg"/></svg></button><button aria-label="Reassociate"><svg><use href="#d-chg"/></svg></button></div>
        </div>
      </div>
      <button class="task-bar"><svg class="lead"><use href="#folders"/></svg><span>Drawing Composition</span></button>
      <button class="task-bar"><svg class="lead"><use href="#terrain"/></svg><span>Terrain Model</span></button>
      <div class="tabs">
        <button class="tab on"><svg><use href="#tasks"/></svg>Tasks</button>
        <button class="tab"><svg><use href="#folders"/></svg>Project Explorer</button>
      </div>
    </aside>

    <div class="views">
      <section class="view view-one">
        <div class="view-title"><i class="square"></i><h2>View 1, Default</h2>
          <div class="winbtns flat"><button aria-label="Minimize"><svg><use href="#wmin"/></svg></button><button aria-label="Maximize"><svg><use href="#wmax"/></svg></button><button aria-label="Close"><svg><use href="#wx"/></svg></button></div>
        </div>
        <div class="view-tools">
          <button class="dd" aria-label="View Attributes"><svg><use href="#vattr"/></svg></button>
          <button aria-label="Display Style"><svg><use href="#vdisp"/></svg></button>
          <button class="dd" aria-label="Brightness"><svg><use href="#vsun"/></svg></button>
          <i class="sep"></i>
          <button aria-label="Update View"><svg><use href="#brush"/></svg></button>
          <button aria-label="Zoom In"><svg><use href="#zin"/></svg></button>
          <button aria-label="Zoom Out"><svg><use href="#zout"/></svg></button>
          <button aria-label="Window Area"><svg><use href="#warea"/></svg></button>
          <button aria-label="Fit View"><svg><use href="#fit"/></svg></button>
          <button aria-label="Rotate View"><svg><use href="#rot"/></svg></button>
          <button aria-label="Pan View"><svg><use href="#hand"/></svg></button>
          <i class="sep"></i>
          <button aria-label="View Previous"><svg><use href="#vprev"/></svg></button>
          <button aria-label="View Next"><svg><use href="#vnext"/></svg></button>
          <i class="sep"></i>
          <button class="on" aria-label="Copy View"><svg><use href="#vcopy"/></svg></button>
          <button aria-label="Clip Volume"><svg><use href="#vclip"/></svg></button>
          <button aria-label="Clip Mask"><svg><use href="#vmask"/></svg></button>
        </div>
        <div class="canvas">
          <svg class="drawing" role="img" aria-label="Design lines">
            <path d="M403 13L303 87" stroke="#3fd8c0" stroke-width="2"/>
            <path d="M469 5L359 89" stroke="#f6f62c" stroke-width="4"/>
            <path d="M494 38L430 84" stroke="#3fd8c0" stroke-width="2"/>
          </svg>
        </div>
        <div class="vscroll"><i class="a-up"></i><i class="thumb"></i><i class="a-down"></i></div>
        <div class="hscroll"><i class="a-right"></i></div>
      </section>
      <div class="lower">
        <section class="view view-two"></section>
        <section class="view view-three">
          <div class="view-title"><div class="winbtns"><button aria-label="Minimize"><svg><use href="#wmin"/></svg></button><button aria-label="Maximize"><svg><use href="#wmax"/></svg></button><button class="close" aria-label="Close"><svg><use href="#wx"/></svg></button></div></div>
          <div class="view-tools"></div>
          <div class="canvas">
            <svg class="road" viewBox="0 0 20 8"><path d="M0 1l20 2M0 5l20 2" stroke="#e01ee0" stroke-width="2"/></svg>
          </div>
          <div class="vscroll"><i class="a-up"></i><i class="thumb"></i><i class="a-down"></i></div>
          <div class="hscroll"><i class="a-right"></i></div>
        </section>
      </div>
    </div>
  </main>

  <div class="bar keyin">
    <div class="strip">
      <i class="grip"></i>
      <input class="key-text" type="text" aria-label="Key-in">
      <button class="key-drop" aria-label="History"></button>
      <button class="tb" aria-label="Run key-in"><svg><use href="#keyin"/></svg></button>
      <button class="tb dd" aria-label="Browse key-ins"><svg><use href="#keymag"/></svg></button>
    </div>
  </div>

  <div class="bar coords">
    <div class="strip xy">
      <i class="grip"></i>
      <label for="cx">X</label><input id="cx" type="text" value="3202748.4602">
      <i class="sep"></i>
      <label for="cy">Y</label><input id="cy" type="text" value="4103034.9729">
    </div>
    <div class="strip">
      <i class="grip"></i>
      <button class="tb dd" aria-label="Back"><svg><use href="#back"/></svg></button>
      <button class="tb dd" aria-label="Forward"><svg><use href="#fwd"/></svg></button>
      <button class="tb dd" aria-label="View groups"><svg><use href="#axes"/></svg></button>
      <div class="viewsel"><svg><use href="#views"/></svg><select class="combo" aria-label="View group"><option>Default Views</option></select></div>
      <i class="sep"></i>
      <button class="tb" aria-label="Manage view groups"><svg><use href="#views"/></svg></button>
      <i class="sep"></i>
      <div class="viewnums"><button class="on">1</button><button class="on">2</button><button class="on">3</button><button>4</button><button>5</button><button>6</button><button>7</button><button>8</button></div>
    </div>
  </div>

  <footer class="status">
    <span class="s-msg">Element Selection &gt; Identify element to add to set</span>
    <i class="grip"></i>
    <span class="s-found">No Elements Found</span>
    <span class="s-ic"><svg><use href="#snap"/></svg></span>
    <span class="s-ic"><svg><use href="#lock"/></svg></span>
    <span class="s-level">Bridge_Design Steel Ob</span>
    <span class="s-blank"></span>
    <span class="s-task"><svg><use href="#smart"/></svg>Drawing (3)</span>
    <span class="s-pos">3202959.2779, 4102947.5615</span>
    <span class="s-ic"></span>
    <span class="s-ic"></span>
    <span class="s-ic"><svg><use href="#save"/></svg></span>
    <span class="s-ic"><svg><use href="#scroll"/></svg></span>
    <span class="s-ic"><svg><use href="#sheets"/></svg></span>
    <span class="s-ic"></span>
    <span class="s-ic"><svg><use href="#focus"/></svg></span>
  </footer>

  <!-- floating windows -->
  <section class="win selection">
    <div class="win-title"><svg><use href="#grayhand"/></svg><h2>Element Selection</h2>
      <div class="winbtns flat"><button aria-label="Minimize"><svg><use href="#wmin"/></svg></button><button aria-label="Maximize"><svg><use href="#wmax"/></svg></button><button aria-label="Close"><svg><use href="#wx"/></svg></button></div>
    </div>
    <div class="sel-body">
      <div class="sel-grid">
        <button class="on" aria-label="Individual"><svg><use href="#target"/></svg></button><button aria-label="Block"><svg><use href="#rect"/></svg></button><button aria-label="Shape"><svg><use href="#skew"/></svg></button><button aria-label="Circle"><svg><use href="#circle"/></svg></button><button aria-label="Line"><svg><use href="#slash"/></svg></button>
        <button class="on" aria-label="New"><svg><use href="#sparkle"/></svg></button><button aria-label="Add"><svg><use href="#bplus"/></svg></button><button aria-label="Subtract"><svg><use href="#bminus"/></svg></button><button aria-label="Invert"><svg><use href="#invert"/></svg></button><button aria-label="Select all"><svg><use href="#selall"/></svg></button>
      </div>
      <div class="sel-side"><button aria-label="Disable handles"><svg><use href="#nosel"/></svg></button><button aria-label="Selection mode"><svg><use href="#selarrow"/></svg></button></div>
      <button class="caret" aria-label="Expand"></button>
    </div>
  </section>

  <section class="win manager">
    <div class="win-title"><svg><use href="#lvlmgr"/></svg><h2>Level Manager</h2>
      <div class="winbtns"><button aria-label="Minimize"><svg><use href="#wmin"/></svg></button><button aria-label="Maximize"><svg><use href="#wmax"/></svg></button><button class="close" aria-label="Close"><svg><use href="#wx"/></svg></button></div>
    </div>
    <nav class="lm-menu"><button><u>L</u>evels</button><button><u>F</u>ilter</button><button><u>E</u>dit</button></nav>
    <div class="lm-tools">
      <button class="tb" aria-label="New level"><svg><use href="#newlvl"/></svg></button>
      <button class="tb" aria-label="Delete level"><svg><use href="#dellvl"/></svg></button>
      <i class="sep"></i>
      <button class="tb" aria-label="Change"><svg><use href="#chg"/></svg></button>
      <i class="sep"></i>
      <label for="symb">Symbology:</label>
      <select id="symb" class="combo symb"><option>ByLevel</option></select>
      <i class="sep"></i>
      <button class="tb val filter"><svg><use href="#funnel"/></svg><span>*Untitle</span></button>
      <i class="sep"></i>
      <button class="tb dd wide" aria-label="Levels"><svg><use href="#chart"/></svg></button>
    </div>
    <div class="lm-body">
      <div class="tree">
        <ul>
          <li class="sel"><i class="branch"></i><svg><use href="#dgn"/></svg><span>020308_LevelFilt...</span></li>
          <li><i class="branch"></i><svg><use href="#glayers"/></svg><span>All Levels</span></li>
          <li><i class="branch box"></i><svg><use href="#funnel"/></svg><span>Filters</span></li>
        </ul>
        <div class="sbar"><i class="a-left"></i><i class="hthumb"></i><i class="a-right"></i></div>
      </div>
      <div class="levels">
        <table>
          <colgroup><col class="c-tri"><col class="c-name"><col class="c-log"><col class="c-desc"><col class="c-val"><col class="c-val"><col class="c-val"><col class="c-flag"><col class="c-flag"><col class="c-flag"></colgroup>
          <thead>
            <tr>
              <th><svg><use href="#triangle"/></svg></th>
              <th>Name <svg><use href="#sortup"/></svg></th>
              <th><svg><use href="#book"/></svg></th>
              <th>Description</th>
              <th><svg><use href="#hcolor"/></svg></th>
              <th><svg><use href="#lstyle"/></svg></th>
              <th><svg><use href="#lweight"/></svg></th>
              <th class="mid"><svg><use href="#globe"/></svg></th>
              <th class="mid"><svg><use href="#gear"/></svg></th>
              <th class="mid"><svg><use href="#lock"/></svg></th>
            </tr>
            <tr class="filters">
              <td></td><td></td><td></td><td><input type="text" value="storm" aria-label="Description filter"></td><td></td><td></td><td></td><td></td><td></td><td></td>
            </tr>
          </thead>
          <tbody>
            <tr class="used"><td></td><td>Drainage_EX_Storm Sewer</td><td></td><td>Existing storm sewer line</td><td><i class="chip olive"></i>84</td><td>1010</td><td><i class="ln"></i>0</td><td class="mid"><svg><use href="#check"/></svg></td><td></td><td></td></tr>
            <tr class="used"><td></td><td>Drainage_PR_Storm Sewer</td><td></td><td>Proposed storm sewer line</td><td><i class="chip gray"></i>112</td><td>0933</td><td><i class="ln thick"></i>2</td><td class="mid"><svg><use href="#check"/></svg></td><td></td><td></td></tr>
            <tr><td></td><td>Utilities_EX_Underground Combined S...</td><td></td><td>Existing combined storm and sanitary se...</td><td><i class="chip olive"></i>84</td><td>1601</td><td><i class="ln"></i>0</td><td class="mid"><svg><use href="#check"/></svg></td><td></td><td></td></tr>
            <tr class="hover"><td></td><td>XSC_Proposed Drainage</td><td></td><td>Cross Section Criteria Proposed Drainage...</td><td><i class="chip green"></i>2</td><td><i class="ln"></i>0</td><td><i class="ln thick"></i>2</td><td class="mid"><svg><use href="#check"/></svg></td><td></td><td></td></tr>
          </tbody>
        </table>
        <div class="sbar"><i class="a-left"></i><i class="hthumb"></i><i class="a-right"></i></div>
      </div>
    </div>
    <div class="lm-status"><span>Active Level: Bridge_Design Steel Object</span><span>4 of 777 displayed; 0 selected;</span></div>
  </section>

  <div class="halo"></div>
  <svg class="pointer" viewBox="0 0 10 16"><path d="M1 1v12l3-3 2 5 2-1-2-5h4z" fill="#fff" stroke="#333" stroke-width=".8"/></svg>
  <div class="mark"><div class="mark-e"><i></i><i></i></div></div>
</div>

</body>
</html>
```
FILE: styles.css
```css
* {
  box-sizing: border-box;
}

body {
  margin: 0;
  background: #000;
  overflow: hidden;
  color: #111;
  font: 8px/12px Roboto, "Liberation Sans", Arial, sans-serif;
}

button, input, select {
  font: inherit;
  color: inherit;
  margin: 0;
  padding: 0;
  border: 0;
  background: none;
  border-radius: 0;
}

select {
  appearance: none;
}

h1, h2, ul {
  margin: 0;
  padding: 0;
  font-weight: normal;
}

u {
  text-underline-offset: 1px;
}

i {
  display: block;
  flex: none;
}

svg {
  display: block;
  flex: none;
  width: 15px;
  height: 15px;
}

.sprite {
  display: none;
}

.ser {
  font-family: "Liberation Serif", serif;
  font-weight: bold;
}

.red {
  fill: #a3202c;
}

.blue {
  fill: #2b66b0;
}

/* a 5:4 screen centred on black */
.desktop {
  position: relative;
  display: flex;
  flex-direction: column;
  height: 100vh;
  aspect-ratio: 5 / 4;
  margin: 0 auto;
  background: #eeeeef;
  overflow: hidden;
}

/* title bars */
.app-title {
  display: flex;
  align-items: center;
  gap: 5px;
  height: 16px;
  padding: 0 1px;
  background: linear-gradient(#8ea9cf, #b4c7e2);
  border-top: 1px solid #4a5c75;
}

.app-title h1 {
  flex: 1;
  white-space: nowrap;
  font: 8px/14px "Open Sans", "Noto Sans", sans-serif;
}

.app-title .ic12 {
  width: 12px;
  height: 12px;
}

.winbtns {
  display: flex;
  gap: 2px;
}

.winbtns button {
  display: flex;
  align-items: center;
  justify-content: center;
  width: 22px;
  height: 12px;
  border: 1px solid #66789a;
  border-radius: 2px;
  background: linear-gradient(#d5e1f0, #a9bfdb);
}

.winbtns svg {
  width: 9px;
  height: 8px;
}

.winbtns .close {
  background: linear-gradient(#dc9a90, #bd3a2c);
  border-color: #7c3a3a;
}

.flat button {
  background: #cfd9e6;
  border-color: #9aa8ba;
}

/* menus and toolbars */
.menubar {
  display: flex;
  align-items: center;
  gap: 8px;
  height: 16px;
  padding-left: 11px;
  background: #f1f1f1;
}

.bar {
  display: flex;
  height: 24px;
  align-items: center;
}

.strip {
  display: flex;
  align-items: center;
  height: 23px;
  padding-right: 1px;
  background: linear-gradient(#fbfbfb, #e4e4e6);
  border-right: 1px solid #d0d0d0;
}

.grip {
  width: 4px;
  height: 14px;
  margin: 0 1px;
  border-left: 2px dotted #b5b5b8;
}

.sep {
  width: 1px;
  height: 20px;
  margin: 0 1px;
  background: #a8a8ac;
}

.tb {
  display: flex;
  align-items: center;
  justify-content: center;
  width: 20px;
  height: 20px;
}

.tb.dd {
  width: 30px;
  padding-left: 2px;
}

.tb.wide {
  width: 34px;
}

.dd::after, .val::after, .caret::after, .key-drop::after, .tasks-combo::after {
  content: "";
  flex: none;
  margin-left: auto;
  margin-right: 2px;
  border: 3px solid transparent;
  border-top: 4px solid #111;
  border-bottom: 0;
}

.val {
  justify-content: flex-start;
  padding-left: 2px;
}

.val span {
  white-space: nowrap;
}

.filter {
  width: 48px;
}

.num {
  width: 46px;
  padding: 0;
}

.num::after {
  margin-right: 6px;
}

.num.class::after {
  margin-right: 2px;
}

.num span {
  width: 16px;
  text-align: center;
}

.num.class span {
  width: 21px;
  padding-left: 1px;
  text-align: left;
}

.combo {
  height: 15px;
  padding: 0 9px 0 1px;
  border: 1px solid #8c8c8c;
  border-radius: 2px;
  background: linear-gradient(45deg, transparent 50%, #111 50%) right 6px center / 3px 3px no-repeat,
              linear-gradient(-45deg, transparent 50%, #111 50%) right 3px center / 3px 3px no-repeat,
              linear-gradient(#fafafa, #dedede);
}

.level {
  width: 95px;
  margin: 0 3px;
}

.swatch {
  width: 69px;
  height: 15px;
  margin-left: 1px;
  border: 1px solid #222;
  background: linear-gradient(#c8101c, #c8101c) center / 66px 2px no-repeat #000;
}

/* work area */
.work {
  flex: 1;
  display: flex;
  min-height: 0;
}

.tasks {
  display: flex;
  flex-direction: column;
  width: 200px;
  padding: 0 1px 0 2px;
  background: #ececef;
  border-right: 5px solid #b9bdd2;
  font-family: "DejaVu Sans", sans-serif;
}

.tasks-head {
  display: flex;
  align-items: center;
  height: 14px;
  margin: 0 -1px 3px -2px;
  padding: 0 1px 0 2px;
  background: #ccd6e2;
}

.tasks-head h2 {
  flex: 1;
  font-size: 8px;
  color: #445;
}

.tasks-head svg {
  width: 11px;
  height: 10px;
}

.tasks-combo {
  display: flex;
  align-items: center;
  height: 18px;
  margin-bottom: 4px;
  padding: 0 4px;
  gap: 3px;
  background: #fff;
  border: 1px solid #8a8a8e;
  border-radius: 2px;
}

.tasks-combo svg {
  width: 11px;
  height: 10px;
}

.tasks-combo select {
  flex: 1;
  height: 16px;
  border-right: 1px solid #c4c4c4;
}

.main-tools {
  display: flex;
  margin: 0 0 3px 2px;
  height: 24px;
  background: #fff;
}

.main-tools button {
  position: relative;
  width: 20px;
  height: 20px;
  margin: 1px 0;
  padding-left: 5px;
}

.main-tools .on {
  padding-left: 4px;
  background: #f6c88a;
  border: 1px solid #8a7a5a;
}

.main-tools span {
  position: absolute;
  left: 1px;
  bottom: 0;
  padding: 0 1px;
  font: 7px/8px "Liberation Sans", sans-serif;
  color: #777;
  border-right: 1px solid #999;
  border-top: 1px solid #999;
}

.task-bar {
  display: flex;
  align-items: center;
  height: 18px;
  margin-bottom: 2px;
  padding: 0 2px 0 18px;
  border: 1px solid #b4b4b6;
  border-radius: 3px;
  background: linear-gradient(#f4f4f4, #d6d6d8);
}

.main-tools + .task-bar {
  margin-bottom: 1px;
}

.task-bar > span {
  flex: 1;
  text-align: left;
  white-space: nowrap;
}

.task-bar .lead {
  margin: 0 4px 0 -15px;
}

.task-bar > svg, .task-bar button svg {
  width: 11px;
  height: 11px;
}

.task-bar button {
  width: 13px;
  padding: 1px;
}

.task-bar.open {
  height: 18px;
  margin-bottom: 0;
  border-color: #d3e6f4;
  background: linear-gradient(#fff, #bfe1f6);
  font-weight: bold;
}

.tool-rows {
  margin: 0 0 5px 4px;
  background: #fff;
}

.tool-row {
  display: grid;
  grid-template-columns: 10px 1fr;
  height: 21px;
  border-bottom: 1px solid #ccc;
}

.tool-row:last-child {
  border: 0;
}

.tool-row.two {
  height: 41px;
}

.tool-row b {
  display: flex;
  align-items: center;
  justify-content: center;
  background: linear-gradient(90deg, #eee, #cfcfd2);
  color: #888;
  font-weight: normal;
}

.two b {
  grid-row: 1 / 3;
}

.tool-row div {
  display: flex;
  overflow: hidden;
}

.tool-row button {
  width: 20px;
  height: 20px;
  padding: 2px 0 0 3px;
  flex: none;
}

.tabs {
  display: flex;
  gap: 3px;
  margin: auto -1px 0 -2px;
  padding: 0 3px 1px;
  border-top: 1px solid #9a9a9e;
}

.tab {
  display: flex;
  align-items: center;
  gap: 2px;
  height: 14px;
  padding: 0 4px;
  white-space: nowrap;
  border: 1px solid #9a9a9e;
  border-top: 0;
  border-radius: 0 0 3px 3px;
  font-family: "Open Sans", sans-serif;
}

.tab.on {
  background: #fff;
  border-bottom: 2px solid #e8b04a;
}

.tab svg {
  width: 11px;
  height: 11px;
}

.views {
  flex: 1;
  display: flex;
  flex-direction: column;
  min-width: 0;
}

.view {
  display: grid;
  grid-template-columns: minmax(0, 1fr) 12px;
  grid-template-rows: 19px 18px minmax(0, 1fr) 12px;
  padding: 0 5px 5px;
  background: #c6d4e3;
  border: 1px solid #6f7f94;
}

.view-one {
  height: 295px;
  border-radius: 5px 5px 0 0;
  background: #d5dfeb;
}

.view-one .view-title {
  background: linear-gradient(#b5c3d5, #d2dde8);
}

.lower {
  flex: 1;
  display: flex;
  min-height: 0;
}

.view-two {
  width: 360px;
  background: #dbe6f2;
}

.view-three {
  flex: 1;
  min-width: 0;
  background: #b9cfec;
  border-bottom-color: #1d5560;
}

.view-title {
  grid-column: 1 / 3;
  display: flex;
  align-items: center;
  gap: 4px;
  margin: 0 -5px;
  padding: 3px 6px 0 11px;
}

.view-title .winbtns {
  margin-left: auto;
}

.view-title h2, .win-title h2 {
  font: 8px/12px "Open Sans", sans-serif;
  white-space: nowrap;
}

.square {
  width: 5px;
  height: 5px;
  background: #333;
}

.view-tools {
  grid-column: 1 / 3;
  display: flex;
  align-items: center;
  padding-bottom: 1px;
  background: #f1f1f3;
}

.view-tools button {
  display: flex;
  align-items: center;
  justify-content: center;
  width: 15px;
  height: 16px;
}

.view-tools .dd {
  width: 26px;
  padding-left: 2px;
}

.view-tools svg {
  width: 12px;
  height: 12px;
}

.view-tools .on {
  border: 1px solid #555;
  background: #f8d98a;
}

.view-tools .sep {
  height: 14px;
  margin: 0 2px;
}

.canvas {
  display: flex;
  align-items: center;
  justify-content: flex-end;
  background: #000;
  overflow: hidden;
}

.drawing {
  width: 100%;
  height: 100%;
}

.road {
  width: 20px;
  height: 8px;
  margin-right: 5px;
}

.vscroll, .hscroll, .sbar {
  display: flex;
  align-items: center;
  justify-content: space-between;
  background: #f0f0f0;
}

.vscroll {
  flex-direction: column;
  padding: 3px 0;
}

.hscroll {
  grid-column: 1;
  justify-content: flex-end;
  padding-right: 4px;
}

.thumb {
  width: 10px;
  height: 11px;
  border: 1px solid #999;
  background: repeating-linear-gradient(#555 0 1px, #eee 1px 2px) center / 5px 5px no-repeat #eee;
}

.a-up, .a-down, .a-left, .a-right {
  border: 3px solid transparent;
}

.a-up { border-bottom-color: #333; border-top: 0; }
.a-down { border-top-color: #333; border-bottom: 0; }
.a-left { border-right-color: #333; border-left: 0; }
.a-right { border-left-color: #333; border-right: 0; }

/* floating windows */
.win {
  position: absolute;
  display: flex;
  flex-direction: column;
  border: 1px solid #5f7790;
  border-radius: 5px 5px 0 0;
}

.win-title {
  display: flex;
  align-items: center;
  gap: 3px;
}

.win-title .winbtns {
  margin-left: auto;
}

.win-title > svg {
  width: 11px;
  height: 11px;
}

.selection {
  top: 125px;
  right: 23px;
  width: 161px;
  height: 74px;
  background: #f0f0f1;
}

.selection .win-title {
  height: 18px;
  padding: 0 2px;
  background: linear-gradient(#b9c5d3, #dbe2ea);
  border-radius: 4px 4px 0 0;
}

.sel-body {
  display: flex;
  padding: 4px 21px 0 17px;
}

.sel-grid {
  display: grid;
  grid-template-columns: repeat(5, 15px);
  row-gap: 3px;
}

.sel-grid button {
  display: flex;
  align-items: center;
  justify-content: center;
  height: 16px;
  background: #fff;
}

.sel-grid svg {
  width: 12px;
  height: 12px;
}

.sel-grid .on {
  background: #f8cf86;
  border: 1px solid #777;
}

.sel-side {
  display: grid;
  row-gap: 4px;
  align-content: start;
  margin: 1px auto 0 13px;
}

.sel-body .caret {
  padding-top: 28px;
}

.manager {
  top: 188px;
  left: 125px;
  right: 37px;
  bottom: 75px;
  padding: 0 5px 2px;
  background: #b7d3ec;
  border-right-color: #1f5f6f;
  border-bottom: 2px solid #1d5560;
}

.manager .win-title {
  height: 21px;
  margin: 0 -5px;
  padding: 2px 5px 0;
  background: linear-gradient(#9bb6d6, #b5cbe6);
  border-radius: 4px 4px 0 0;
}

.lm-menu {
  display: flex;
  align-items: center;
  gap: 9px;
  height: 13px;
  padding-left: 6px;
  background: #f5f5f5;
  border-bottom: 1px solid #d8d8d8;
}

.lm-tools {
  display: flex;
  align-items: center;
  height: 21px;
  background: #efefef;
}

.lm-tools .tb {
  width: 19px;
}

.lm-tools .filter {
  width: 52px;
}

.lm-tools .tb.wide {
  width: 27px;
  padding-left: 0;
}

.lm-tools label {
  padding: 0 3px 0 6px;
}

.symb {
  height: 12px;
  width: 49px;
  padding-left: 3px;
  margin-right: 4px;
}

.lm-body {
  flex: 1;
  display: grid;
  grid-template-columns: 99px minmax(0, 1fr);
  gap: 4px;
  min-height: 0;
  background: #eee;
}

.tree, .levels {
  display: flex;
  flex-direction: column;
  background: #fff;
  border: 1px solid #777;
  border-bottom: 0;
}

.tree ul {
  flex: 1;
  list-style: none;
}

.tree li {
  display: flex;
  align-items: center;
  height: 13px;
  padding-left: 6px;
  white-space: nowrap;
}

.tree li svg {
  width: 11px;
  height: 11px;
  margin-right: 1px;
}

.tree span {
  padding: 0 1px;
}

.tree .sel span {
  flex: 1;
  background: #e2e2e2;
  border: 1px solid #c4c4c4;
  line-height: 10px;
}

.branch {
  width: 7px;
  height: 13px;
  background: linear-gradient(#999, #999) 0 50% / 7px 1px no-repeat;
  border-left: 1px solid #aaa;
}

.branch.box {
  width: 7px;
  height: 7px;
  margin-left: -3px;
  margin-right: 3px;
  border: 1px solid #777;
  background: linear-gradient(#333, #333) center / 3px 1px no-repeat,
              linear-gradient(#333, #333) center / 1px 3px no-repeat;
}

.sbar {
  height: 12px;
  padding: 0 4px;
}

.hthumb {
  flex: 1;
  height: 10px;
  margin-left: 6px;
  margin-right: 14px;
  border: 1px solid #aaa;
  border-radius: 1px;
  background: repeating-linear-gradient(90deg, #666 0 1px, transparent 1px 2px) center / 5px 4px no-repeat,
              linear-gradient(#f4f4f4, #cfcfcf);
}

.levels .hthumb {
  margin-left: 4px;
  margin-right: 78px;
}

.levels table {
  table-layout: fixed;
  width: 100%;
  border-collapse: collapse;
}

.levels .sbar {
  margin-top: auto;
}

.c-tri { width: 20px; }
.c-name { width: 141px; }
.c-log { width: 68px; }
.c-desc { width: 150px; }
.c-val { width: 54px; }
.c-flag { width: 26px; }

.levels th {
  height: 14px;
  padding: 0 3px;
  text-align: left;
  font-weight: normal;
  background: linear-gradient(#fff, #ececf0);
  white-space: nowrap;
}

.levels th svg {
  display: inline-block;
  vertical-align: middle;
  width: 11px;
  height: 11px;
}

.levels th.mid, .levels td.mid {
  text-align: center;
  padding: 0 1px;
}

.filters td {
  height: 13px;
  padding: 0;
  background: #fdf9dc;
  border: 1px solid #333;
}

.filters input {
  display: block;
  width: 100%;
  height: 11px;
}

.levels tbody td {
  height: 12px;
  padding: 0 0 0 3px;
  white-space: nowrap;
  line-height: 12px;
}

.levels tbody svg {
  display: inline-block;
  vertical-align: middle;
  width: 10px;
  height: 10px;
}

.levels .used td {
  font-weight: bold;
  font-family: "Liberation Sans", Arial, sans-serif;
}

.hover td {
  background: #edf4fa;
}

.chip, .ln {
  display: inline-block;
  vertical-align: middle;
  margin-right: 4px;
}

.chip {
  width: 9px;
  height: 9px;
  border: 1px solid #555;
}

.olive { background: #b0a818; }
.gray { background: #8f8f8f; }
.green { background: #0ceb1c; }

.ln {
  width: 32px;
  height: 1px;
  background: #777;
  margin-right: 3px;
}

.thick {
  height: 2px;
  background: #111;
}

.lm-status {
  display: grid;
  grid-template-columns: 272px 1fr;
  gap: 2px;
  height: 17px;
  padding-top: 3px;
  background: #efefef;
}

.lm-status span {
  padding-left: 2px;
  border: 1px solid #bbb;
  border-bottom-color: #fff;
}

/* bottom bars */
.key-text {
  width: 271px;
  height: 13px;
  margin: 0 1px 0 2px;
  background: #fff;
  border: 1px solid #bbb;
}

.key-drop {
  width: 11px;
  height: 13px;
  margin-right: 5px;
  border: 1px solid #999;
}

.key-drop::after, .caret::after {
  display: block;
  margin: 0 auto;
  width: 0;
}

.coords .strip {
  height: 24px;
}

.xy {
  width: 256px;
}

.xy label {
  width: 20px;
  text-align: center;
  font: bold 12px/14px "Liberation Sans", sans-serif;
}

.xy input {
  width: 97px;
  height: 13px;
  margin-right: 3px;
  padding-left: 3px;
  border: 1px solid #aaa;
  background: #f5f5f5;
  color: #777;
}

.viewsel {
  display: flex;
  align-items: center;
}

.viewsel svg {
  width: 11px;
  height: 11px;
  margin: 0 -14px 0 3px;
  z-index: 1;
}

.viewsel .combo {
  width: 91px;
  margin-right: 3px;
  padding-left: 15px;
}

.viewnums {
  display: flex;
  margin-left: 1px;
}

.viewnums button {
  width: 10px;
  height: 14px;
  border-right: 1px solid #777;
}

.viewnums .on {
  background: #f8ce8a;
}

.status {
  display: flex;
  align-items: center;
  height: 18px;
  white-space: nowrap;
  border-top: 1px solid #c2c2c2;
}

.status span {
  display: flex;
  align-items: center;
  flex: none;
  height: 16px;
  border-left: 1px solid #c2c2c2;
}

.status svg {
  width: 12px;
  height: 12px;
}

.status .s-msg {
  flex: 1;
  padding-left: 2px;
  border: 0;
}

.s-found {
  width: 94px;
  padding-left: 19px;
}

.s-ic {
  width: 20px;
  justify-content: center;
}

.status .s-level {
  width: 84px;
  padding-left: 1px;
}

.s-blank { width: 72px; }

.s-task {
  width: 73px;
  padding-left: 3px;
  gap: 5px;
}

.s-pos {
  width: 118px;
  padding-left: 1px;
}

/* overlays */
.halo {
  position: absolute;
  top: 285px;
  left: 461px;
  width: 58px;
  height: 58px;
  border-radius: 50%;
  background: #f7ee00;
  mix-blend-mode: multiply;
}

.pointer {
  position: absolute;
  top: 312px;
  left: 490px;
  width: 9px;
  height: 14px;
}

.mark {
  position: absolute;
  right: 42px;
  bottom: 33px;
  width: 58px;
  height: 71px;
  padding: 17px 2px 15px 18px;
  background: #a4557fcc;
  border: 1px solid #b98f7a;
}

.mark-e {
  height: 100%;
  display: grid;
  gap: 6px;
  padding: 6px 0 5px 6px;
  background: #f6eef0;
}

.mark-e i {
  background: #cc767c;
}
```
